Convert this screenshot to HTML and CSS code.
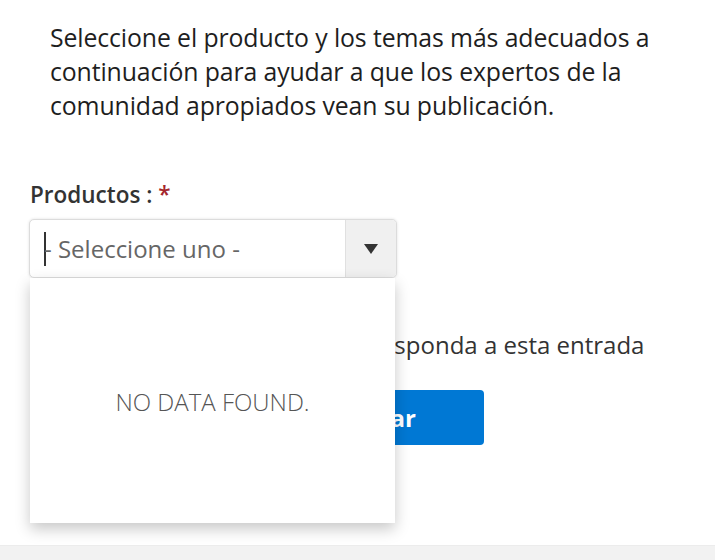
FILE: index.html
```html
<!DOCTYPE html>
<html lang="es">
<head>
<meta charset="utf-8">
<link rel="stylesheet" href="styles.css">
</head>
<body>
<main class="page">
  <p class="intro">Seleccione el producto y los temas más adecuados a continuación para ayudar a que los expertos de la comunidad apropiados vean su publicación.</p>
  <div class="label">Productos : <span class="req">*</span></div>
  <div class="field">
    <div class="select">
      <div class="select-text"><span class="caret"></span>- Seleccione uno -</div>
      <div class="select-arrow"><svg width="14" height="10" viewBox="0 0 14 10"><path d="M0 0 H14 L7 10 Z" fill="#333"/></svg></div>
    </div>
    <div class="dropdown"><span class="nodata">NO DATA FOUND.</span></div>
  </div>
  <div class="notify">
    <span class="check"></span>
    <span class="notify-text">Notificarme cuando alguien responda a esta entrada</span>
  </div>
  <div class="actions">
    <button class="btn">Enviar</button>
  </div>
</main>
<footer class="footer"></footer>
</body>
</html>
```
FILE: styles.css
```css
html, body {
  margin: 0;
  padding: 0;
  background: #fff;
}
body {
  font-family: "Open Sans", "Noto Sans", sans-serif;
  color: #222;
  display: flex;
  flex-direction: column;
  height: 560px;
  overflow: hidden;
}
.page {
  padding: 20px 30px 0 30px;
  height: 545px;
  box-sizing: border-box;
}
.intro {
  margin: 0 0 0 20px;
  font-size: 24.8px;
  line-height: 34px;
  width: 650px;
  color: #1e1e1e;
  letter-spacing: -0.1px;
}
.label {
  margin-top: 59px;
  font-size: 22.5px;
  font-weight: 600;
  color: #333;
  line-height: 28px;
}
.req {
  color: #a4262c;
}
.field {
  position: relative;
  margin-top: 10px;
  width: 368px;
  margin-left: -1px;
}
.select {
  display: flex;
  height: 59px;
  box-sizing: border-box;
  border: 1px solid #dcdcdc;
  border-radius: 5px;
  box-shadow: 0 0 3px rgba(0,0,0,0.12);
  overflow: hidden;
  background: #fff;
}
.select-text {
  flex: 1;
  display: flex;
  align-items: center;
  padding-left: 14px;
  font-size: 24px;
  color: #666;
}
.caret {
  display: inline-block;
  width: 2px;
  height: 34px;
  background: #333;
  margin-right: -2px;
}
.select-arrow {
  width: 50px;
  display: flex;
  align-items: center;
  justify-content: center;
  background: #f0f0f0;
  border-left: 1px solid #e0e0e0;
}
.dropdown {
  position: absolute;
  top: 59px;
  left: 1px;
  width: 365px;
  height: 245px;
  background: #fff;
  box-shadow: 0 6px 14px rgba(0,0,0,0.22);
  display: flex;
  align-items: center;
  justify-content: center;
  z-index: 2;
}
.nodata {
  font-family: "Open Sans", sans-serif;
  font-weight: 300;
  font-size: 24px;
  color: #555;
  margin-top: 2px;
}
.notify {
  display: flex;
  align-items: center;
  margin-top: 50px;
  gap: 8px;
}
.check {
  width: 16px;
  height: 16px;
  border: 1px solid #999;
}
.notify-text {
  font-size: 24px;
  color: #333;
}
.actions {
  display: flex;
  margin-top: 29px;
  padding-left: 242px;
}
.btn {
  width: 212px;
  height: 55px;
  border: none;
  border-radius: 4px;
  background: #0078d4;
  color: #fff;
  font-family: "Open Sans", sans-serif;
  font-weight: 700;
  font-size: 24px;
}
.footer {
  flex: 1;
  background: #f2f2f2;
  border-top: 1px solid #ececec;
}
```
